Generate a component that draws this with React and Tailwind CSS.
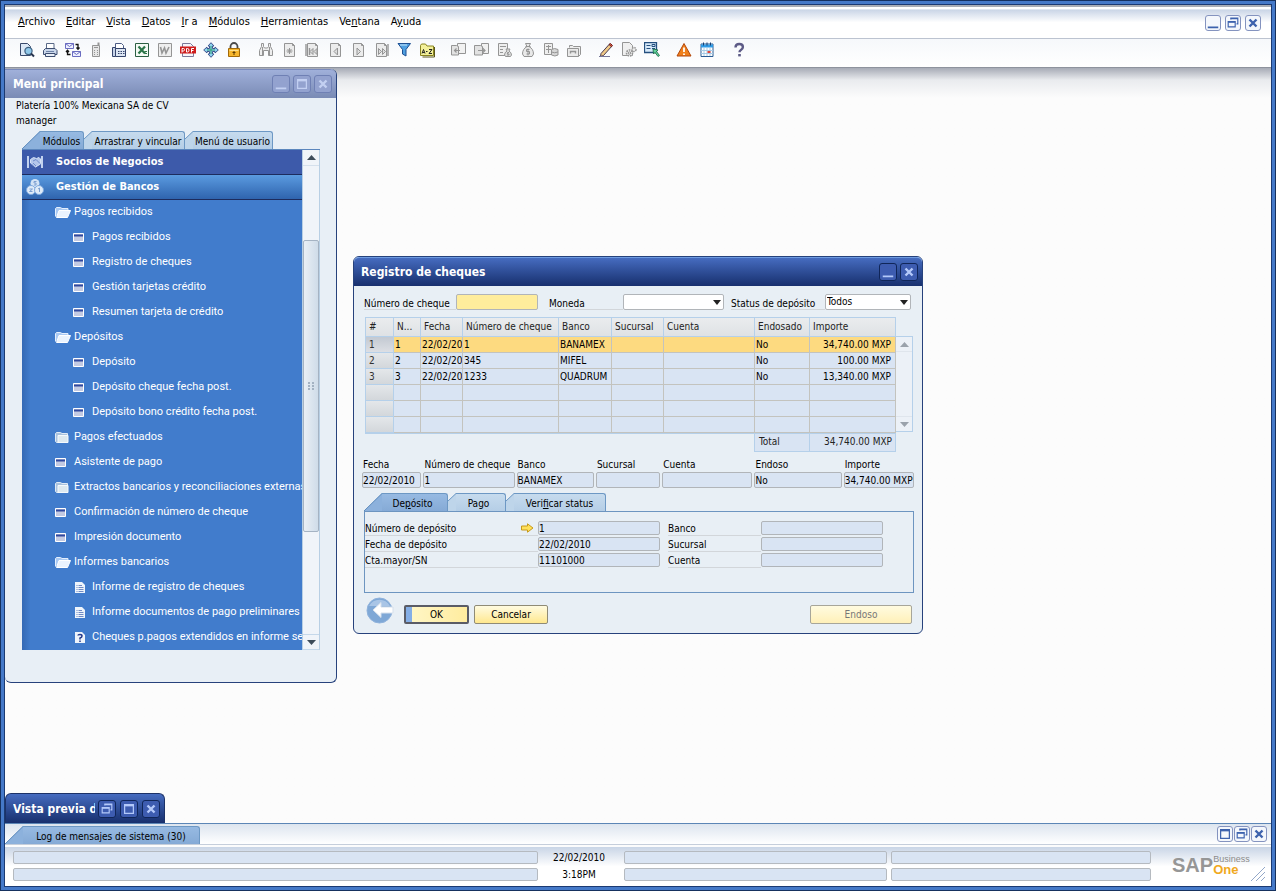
import React from 'react';

const UI = "font-['DejaVu_Sans_Condensed','DejaVu_Sans',sans-serif]";

/* ---------- glyphs ---------- */

function Svg({ children, size = 16 }) {
  return (
    <svg width={size} height={size} viewBox="0 0 16 16" fill="none" aria-hidden="true" className="block shrink-0">
      {children}
    </svg>
  );
}

const GRAY = '#959595';

function Sheet({ children, c = GRAY, fill = '#ececec' }) {
  return (
    <>
      <path d="M3.5 1.5h8l2 2v11h-10z" fill={fill} stroke={c} />
      <path d="M11.5 1.5v2h2" stroke={c} />
      {children}
    </>
  );
}

const ICONS = {
  preview: (
    <>
      <path d="M1.5 1.5h7l3 3v9h-10z" fill="#dce8f6" stroke="#39496b" />
      <circle cx="9.5" cy="9" r="3.6" fill="#8fc7e8" stroke="#3d5f80" strokeWidth="1.2" />
      <path d="M12 11.5l3 3" stroke="#26334d" strokeWidth="2" />
    </>
  ),
  print: (
    <>
      <path d="M4.5 7V1.5h7.500V7" fill="#fff" stroke="#5a6a88" />
      <path d="M1.500 8.500l2-2h9.500l2 2v4h-13.500z" fill="#c9d6ea" stroke="#3c4d70" />
      <path d="M3.500 11.500h9.500v3H3.500z" fill="#e9eff8" stroke="#3c4d70" />
      <path d="M4 9.500h8" stroke="#6f83a8" />
    </>
  ),
  mail: (
    <>
      <path d="M.5 1.500h8v5h-8z" fill="#eef0ff" stroke="#6a6cc0" />
      <path d="M.5 1.500l4 3 4-3" stroke="#6a6cc0" />
      <path d="M7.500 9.500h8v5h-8z" fill="#eef0ff" stroke="#6a6cc0" />
      <path d="M7.500 9.500l4 3 4-3" stroke="#6a6cc0" />
      <path d="M10.500 2.500h2.500v4M11.500 5.500L13 7.300l1.500-1.800M5.500 12.500H2.500V8.500M1 10l1.500-1.800L4 10" stroke="#111" strokeWidth="1.300" />
    </>
  ),
  phone: (
    <>
      <path d="M4.500 3.500h7v11h-7z" fill="#e6e6e6" stroke={GRAY} />
      <path d="M10.500 3V.5" stroke={GRAY} strokeWidth="2" />
      <path d="M6 5.500h4M6 8.500h1M9 8.500h1M6 10.500h1M9 10.500h1M6 12.500h1M9 12.500h1" stroke={GRAY} />
    </>
  ),
  fax: (
    <>
      <path d="M4.500 6V1.500h6l2 2V6" fill="#fff" stroke="#4d5c85" />
      <path d="M1.500 5.500h3v9h-3z" fill="#c7d3e8" stroke="#35446c" />
      <path d="M4.500 6.500h10v8h-10z" fill="#dde6f3" stroke="#35446c" />
      <path d="M7 9.500h1.500M9.500 9.500H11M12 9.500h1.500M7 11.500h1.500M9.500 11.500H11M12 11.500h1.500" stroke="#35446c" />
    </>
  ),
  excel: (
    <>
      <path d="M1.500 1.500h13v13h-13z" fill="#f4faf4" stroke="#2c5f43" />
      <path d="M4.500 4.500l6.500 7M11 4.500l-6.500 7" stroke="#2b7548" strokeWidth="2.200" />
      <path d="M10.500 9.500h2.500M11 11.500h2" stroke="#2b7548" />
    </>
  ),
  word: (
    <>
      <path d="M1.500 1.500h13v13h-13z" fill="#eee" stroke={GRAY} />
      <path d="M3.500 5l1.500 6 2.500-5 1.500 5 3-6" stroke={GRAY} strokeWidth="1.600" />
    </>
  ),
  pdf: (
    <>
      <path d="M2.500 1.500h8l3 3v10h-11z" fill="#f5f5fb" stroke="#7b7b9b" />
      <path d="M0 4.500h16v7H0z" fill="#cf1d1d" />
      <path d="M2 10.500v-4h1.500q1 0 1 1.200T3.500 9H2M6.500 6.500v3.500h1q1.500 0 1.500-1.800T7.500 6.500zM11.500 10.500v-4H14M11.500 8.500h2" stroke="#fff" />
    </>
  ),
  move: (
    <>
      <path d="M8 .7l3 3.300H9.500v2.500H12V5l3.300 3L12 11V9.500H9.500V12H11l-3 3.300L5 12h1.500V9.500H4V11L.7 8 4 5v1.500h2.500V4H5z" fill="#8fd3ee" stroke="#3f5690" />
      <path d="M8 4v8M4 8h8" stroke="#2f9a74" />
    </>
  ),
  lock: (
    <>
      <path d="M4.500 7V4.500a3.500 3.500 0 017 0V7" stroke="#4b4b4b" strokeWidth="1.800" />
      <path d="M2.500 6.500h11v8h-11z" fill="#f7b62c" stroke="#a1690a" />
      <path d="M3.500 8.500h9" stroke="#fde08b" />
      <path d="M8 9v4M6.500 10.500h3" stroke="#5d3b00" />
    </>
  ),
  find: (
    <path d="M3.500 1.500h2v3l1 1.500h3l1-1.500v-3h2v3l2 4v5h-4v-5h-5v5h-4v-5l2-4zM6.500 8.500h3M4.500 5v8M11.500 5v8" fill="#eee" stroke={GRAY} />
  ),
  add: <Sheet><path d="M8.500 6v6M5.500 9h6M6.500 7l4 4M10.500 7l-4 4" stroke={GRAY} /></Sheet>,
  first: <Sheet><path d="M2 2v12M5.500 6v7" stroke={GRAY} strokeWidth="1.400" /><path d="M9 6.500v6L6 9.500zM13 6.500v6l-3-3z" fill="#ddd" stroke={GRAY} /></Sheet>,
  prev: <Sheet><path d="M10.500 6v7L7 9.500z" fill="#ddd" stroke={GRAY} /></Sheet>,
  next: <Sheet><path d="M7 6v7l3.500-3.500z" fill="#ddd" stroke={GRAY} /></Sheet>,
  last: <Sheet><path d="M15 2v12" stroke={GRAY} strokeWidth="1.400" /><path d="M5.500 6.500v6l3-3zM9.500 6.500v6l3-3z" fill="#ddd" stroke={GRAY} /></Sheet>,
  filter: (
    <>
      <path d="M2 1.500h12.500l-4.500 6v6.500l-3.500-2V7.500z" fill="#4f9fe0" stroke="#1e4f92" />
      <path d="M4 3h7" stroke="#c8e6fb" />
    </>
  ),
  sort: (
    <>
      <path d="M1.500 13.500v-10l1-1.500h4l1.500 2h6.500v9.500z" fill="#f3f09a" stroke="#8a8420" />
      <path d="M15.500 5v10h-12" stroke="#5b571a" />
      <path d="M3 11.500l1.500-4 1.500 4M3.500 10.500h2M7 9.500h1.500M10 7.500h3l-3 4h3" stroke="#222" />
    </>
  ),
  copyFrom: (
    <>
      <path d="M6.500 1.500h8v10h-8z" fill="#f1f1f1" stroke={GRAY} />
      <path d="M.5 3.500h5l2 1v8.500h-7z" fill="#e2e2e2" stroke={GRAY} />
      <path d="M9 8.500H3.500M5.500 6.500l-2 2 2 2" stroke={GRAY} strokeWidth="1.200" />
    </>
  ),
  copyTo: (
    <>
      <path d="M7.500 1.500h7v10h-7z" fill="#f1f1f1" stroke={GRAY} />
      <path d="M.5 3.500h6l2 1v8.500h-8z" fill="#e2e2e2" stroke={GRAY} />
      <path d="M4 8.500h6.500M8.500 6l2.500 2.500L8.500 11" stroke={GRAY} strokeWidth="1.200" />
    </>
  ),
  gross: (
    <>
      <path d="M1.500 1.500h9v12h-9z" fill="#eee" stroke={GRAY} />
      <path d="M3 4.500h6M3 7.500h3M3 10.500h3" stroke={GRAY} />
      <path d="M9 7h4l-1 2q2.500 1.500 2.500 4l-1 1.500h-5L7.500 13q0-2.500 2.500-4z" fill="#ddd" stroke={GRAY} />
      <path d="M12 10.500h-1.500v1.500H12V13h-2" stroke={GRAY} />
    </>
  ),
  money: (
    <>
      <path d="M5.500 1.500h5l-1.500 3q4.500 2.500 4.500 7.500l-1.500 2.500H4L2.500 12q0-5 4.500-7.500z" fill="#e9e9e9" stroke={GRAY} />
      <path d="M9.500 7.500h-3v2h3v2.500h-3M8 6.500v7M5.500 4.500h5" stroke={GRAY} />
    </>
  ),
  volume: (
    <>
      <path d="M1.500 1.500h8v11h-8z" fill="#eee" stroke={GRAY} />
      <path d="M3 4.500h5M3 7.500h5M5.500 3v8" stroke={GRAY} />
      <path d="M8.500 7.500q3-2 6.500 0v5.500q-3 2-6.500 0z" fill="#d6d6d6" stroke={GRAY} />
      <path d="M8.500 10q3 1.500 6.500 0" stroke={GRAY} />
    </>
  ),
  drawer: (
    <>
      <path d="M3.500 5.500v-2h3l1 1h7v8l-2 2" fill="#eee" stroke={GRAY} />
      <path d="M1.500 6.500h11v8h-11z" fill="#eaeaea" stroke={GRAY} />
      <path d="M4.500 11.500v-2h5v2" stroke={GRAY} strokeWidth="1.400" />
    </>
  ),
  pencil: (
    <>
      <path d="M3 11.500L11.500 2l2.500 2-8.500 9.500-3 1z" fill="#f0c987" stroke="#4a3a50" />
      <path d="M11 2.500l1.500-1 2 2-1 1.200z" fill="#d4543e" stroke="#6c2020" />
      <path d="M1 14.500h11" stroke="#777799" />
    </>
  ),
  settings: (
    <>
      <path d="M1.500.5h7l3 3v10h-10z" fill="#efefef" stroke={GRAY} />
      <circle cx="8.500" cy="11" r="3" fill="#eee" stroke={GRAY} strokeWidth="1.600" strokeDasharray="1.600 1" />
      <circle cx="13" cy="7.500" r="2" fill="#eee" stroke={GRAY} strokeWidth="1.500" strokeDasharray="1.400 .8" />
      <circle cx="8.500" cy="11" r="1.200" stroke={GRAY} />
    </>
  ),
  form: (
    <>
      <path d="M.5.5h12v10H.5z" fill="#d8eafa" stroke="#25507f" strokeWidth="1.300" />
      <path d="M2.500 3.500h4M2.500 6.500h4M8 2.500h3v2H8zM8 6.500h3" stroke="#25507f" />
      <path d="M9 7l5 1-1.500 1.500 3 4-1.500 1-3-4-1.500 1.500z" fill="#63d39a" stroke="#166343" strokeWidth=".8" />
    </>
  ),
  alert: (
    <>
      <path d="M8 1.500l7 12.500H1z" fill="#f0801d" stroke="#b2470c" strokeLinejoin="round" />
      <path d="M8 5.500v4.500M8 11.500v1.500" stroke="#fff" strokeWidth="1.800" />
    </>
  ),
  calendar: (
    <>
      <path d="M2 2h12v12.500H2z" fill="#fff" stroke="#2b5c94" />
      <path d="M2 2.500h12v3H2z" fill="#2f9be6" />
      <path d="M4.500.5v3M8 .5v3M11.500.5v3" stroke="#123e74" />
      <path d="M5 6v8M8 6v8M11 6v8M2 8.500h12M2 11.500h12" stroke="#a8cbe6" />
      <path d="M8.500 9h3v2h-3z" fill="#e2463c" />
    </>
  ),
  help: (
    <>
      <path d="M4.500 5.500q0-3.500 3.700-3.500t3.700 3q0 1.800-2 3-1.400.8-1.400 2.300" stroke="#5c5a86" strokeWidth="2.400" />
      <path d="M7.200 12h2.600v2.400H7.200z" fill="#5c5a86" />
    </>
  ),
};

const TOOL_GROUPS = [
  [['preview', 'Vista preliminar'], ['print', 'Imprimir'], ['mail', 'Correo'], ['phone', 'SMS'], ['fax', 'Fax'], ['excel', 'Excel'], ['word', 'Word'], ['pdf', 'PDF'], ['move', 'Iniciar aplicación'], ['lock', 'Bloquear pantalla']],
  [['find', 'Buscar'], ['add', 'Crear'], ['first', 'Primero'], ['prev', 'Anterior'], ['next', 'Siguiente'], ['last', 'Último'], ['filter', 'Filtrar'], ['sort', 'Clasificar']],
  [['copyFrom', 'Documento base'], ['copyTo', 'Documento destino'], ['gross', 'Ganancia bruta'], ['money', 'Medios de pago'], ['volume', 'Volumen y peso'], ['drawer', 'Diario']],
  [['pencil', 'Editar'], ['settings', 'Parametrizar'], ['form', 'Formulario']],
  [['alert', 'Alertas'], ['calendar', 'Calendario']],
  [['help', 'Ayuda']],
];

const MENUS = [['', 'A', 'rchivo'], ['', 'E', 'ditar'], ['', 'V', 'ista'], ['', 'D', 'atos'], ['', 'I', 'r a'], ['', 'M', 'ódulos'], ['', 'H', 'erramientas'], ['Ve', 'n', 'tana'], ['A', 'y', 'uda']];

const WIN_GLYPHS = {
  min: <path d="M2 13h12" strokeWidth="2" />,
  max: <><path d="M3 3h10v10H3z" strokeWidth="1.400" /><path d="M3 4h10" strokeWidth="2" /></>,
  restore: <><path d="M2.500 6.500h8v6h-8zM5.500 4V2.500h8v6.500H12" strokeWidth="1.300" /><path d="M2.500 7h8M5.500 3h8" strokeWidth="1.600" /></>,
  close: <path d="M4 4l8 8M12 4l-8 8" strokeWidth="2.800" />,
};

const WIN_TONES = {
  dim: 'border-[#6f80b4] bg-[#93a2cf] text-[#c3d0f2]',
  dark: 'border-[#102659] bg-[#3d5cb0] text-[#b4c9fa]',
  light: 'border-[#8493bf] bg-[#f4f7fc] text-[#3d62ad]',
};

const WIN_LABELS = { min: 'Minimizar', max: 'Maximizar', restore: 'Restaurar', close: 'Cerrar' };

function WinButton({ kind, tone, size = 'h-[18px] w-[18px]' }) {
  return (
    <button type="button" aria-label={WIN_LABELS[kind]} className={`flex items-center justify-center rounded-[3px] border ${size} ${WIN_TONES[tone]}`}>
      <svg width="14" height="14" viewBox="0 0 16 16" fill="none" stroke="currentColor" className="block">{WIN_GLYPHS[kind]}</svg>
    </button>
  );
}

/* ---------- tabs ---------- */

function Tab({ active, wide, className = '', children }) {
  const fill = active ? '#8cb1dc' : '#bed5ea';
  const body = active ? 'bg-linear-to-b from-[#97bae2] to-[#85aad6]' : 'bg-linear-to-b from-[#c6dbee] to-[#b5cee6]';
  return (
    <button type="button" role="tab" aria-selected={!!active} className="flex h-[18px] shrink-0 items-stretch">
      {wide ? (
        <svg width="18" height="18" viewBox="0 0 18 18" className="block" aria-hidden="true">
          <path d="M0 18L18 0v18z" fill={fill} />
          <path d="M0 18L18 .5" stroke="#5f8cbc" fill="none" />
        </svg>
      ) : (
        <svg width="8" height="18" viewBox="0 0 8 18" className="block" aria-hidden="true">
          <path d="M0 18V8L8 0v18z" fill={fill} />
          <path d="M0 8L8 .5" stroke="#6d98c4" fill="none" />
        </svg>
      )}
      <span className={`flex items-center justify-center rounded-tr-[3px] border-t border-r border-[#6d98c4] pt-px whitespace-nowrap ${body} ${className}`}>
        <span>{children}</span>
      </span>
    </button>
  );
}

/* ---------- main menu ---------- */

function TreeIcon({ kind }) {
  if (kind === 'open')
    return (
      <svg width="16" height="14" viewBox="0 0 16 14" className="block shrink-0" aria-hidden="true">
        <path d="M.5 10.500v-8l1-1h4l1.500 1h6v2" fill="#a9c9f3" stroke="#e4effd" />
        <path d="M1.500 11.500l2.500-7h11.500l-3 7z" fill="#eaf3fe" stroke="#fff" />
      </svg>
    );
  if (kind === 'closed')
    return (
      <svg width="16" height="14" viewBox="0 0 16 14" className="block shrink-0" aria-hidden="true">
        <path d="M.5 10.500V2.500l1-1h4l1.500 1h5.500v9h-11z" fill="#a9c2de" stroke="#dfeaf5" />
        <path d="M3 4.500h10v7H3z" fill="#dde9f0" stroke="#f5fafd" />
      </svg>
    );
  if (kind === 'win')
    return (
      <svg width="12" height="12" viewBox="0 0 12 12" className="block shrink-0" aria-hidden="true">
        <path d="M.5 1.500h10v8H.5z" fill="#c3cae2" stroke="#fff" />
        <path d="M1 2.500h9v2H1z" fill="#30489e" />
      </svg>
    );
  return (
    <svg width="12" height="12" viewBox="0 0 12 12" className="block shrink-0" aria-hidden="true">
      <path d="M1 0h7l3 3v8H1z" fill="#eef4fb" />
      {kind === 'doc' ? (
        <path d="M2.500 3.500h1M4.500 3.500H8M2.500 5.500h1M4.500 5.500h5M2.500 7.500h1M4.500 7.500h5M2.500 9.500h1M4.500 9.500h5" stroke="#6f8ac4" />
      ) : (
        <path d="M4 3.500q0-1 2-1t2 1.500T6 6V7.500M6 8.500V10" fill="none" stroke="#243a8c" strokeWidth="1.500" />
      )}
    </svg>
  );
}

const TREE = [
  [0, 'open', 'Pagos recibidos'],
  [1, 'win', 'Pagos recibidos'],
  [1, 'win', 'Registro de cheques'],
  [1, 'win', 'Gestión tarjetas crédito'],
  [1, 'win', 'Resumen tarjeta de crédito'],
  [0, 'open', 'Depósitos'],
  [1, 'win', 'Depósito'],
  [1, 'win', 'Depósito cheque fecha post.'],
  [1, 'win', 'Depósito bono crédito fecha post.'],
  [0, 'closed', 'Pagos efectuados'],
  [0, 'win', 'Asistente de pago'],
  [0, 'closed', 'Extractos bancarios y reconciliaciones externas'],
  [0, 'win', 'Confirmación de número de cheque'],
  [0, 'win', 'Impresión documento'],
  [0, 'open', 'Informes bancarios'],
  [1, 'doc', 'Informe de registro de cheques'],
  [1, 'doc', 'Informe documentos de pago preliminares'],
  [1, 'query', 'Cheques p.pagos extendidos en informe separado'],
];

function Arrow({ up, color }) {
  return (
    <svg width="9" height="5" viewBox="0 0 9 5" className="block" aria-hidden="true">
      <path d={up ? 'M0 5L4.500 0 9 5z' : 'M0 0l4.500 5L9 0z'} fill={color} />
    </svg>
  );
}

function MainMenu() {
  return (
    <section className="absolute top-px left-0 w-[332px] rounded-tr-md rounded-b-md border-r border-b border-[#27427c] bg-[#e8eff6] pb-8">
      <header className="flex h-[29px] items-center justify-between rounded-tr-md border-t border-[#7a8bbd] bg-linear-to-b from-[#a0b0da] to-[#7a8bb5] pr-1 pl-2">
        <h2 className="text-[12px] font-bold text-white">Menú principal</h2>
        <div className="flex gap-[3px]">
          <WinButton kind="min" tone="dim" />
          <WinButton kind="max" tone="dim" />
          <WinButton kind="close" tone="dim" />
        </div>
      </header>
      <div className="px-[11px] text-[10px] leading-[15px]">
        <p>Platería 100% Mexicana SA de CV</p>
        <p>manager</p>
      </div>
      <div role="tablist" className="mt-[3px] flex pl-[17px] text-[10px]">
        <Tab active wide className="w-[44px]">Módulos</Tab>
        <Tab className="w-[93px]">Arrastrar y vincular</Tab>
        <Tab className="w-[80px]">Menú de usuario</Tab>
      </div>
      <div className="mr-4 ml-[17px] flex border-t border-[#5b86bd]">
        <div className="min-w-0 flex-1 overflow-hidden bg-[#417ccc] text-[11px] text-white">
          <button type="button" className="flex h-[25px] w-full items-center gap-3 border-b border-[#1d2c5e] bg-[#3d5aaa] pl-1 font-bold">
            <svg width="18" height="14" viewBox="0 0 18 14" fill="none" aria-hidden="true">
              <path d="M2 1v12M16 1v12" stroke="#c3d2ef" strokeWidth="2" />
              <path d="M4.500 4.500l3-2 3 1 2.500-1 1.500 1.500v5l-5 3-5-4z" fill="#b4c6ea" stroke="#d5e1f6" />
              <path d="M7 6l3-1.500 4 4M7 8l3 3M5.500 9L8 11.500" stroke="#6e8acb" />
            </svg>
            Socios de Negocios
          </button>
          <button type="button" className="flex h-[25px] w-full items-center gap-3 border-b border-[#1d2c5e] bg-linear-to-b from-[#5b9be0] to-[#2f64ae] pl-1 font-bold">
            <svg width="18" height="16" viewBox="0 0 18 16" fill="none" aria-hidden="true">
              <circle cx="9" cy="4.500" r="4.500" fill="#d3e3f6" />
              <circle cx="5" cy="11" r="4.500" fill="#dfebf8" stroke="#7ea9df" />
              <circle cx="13" cy="11" r="4.500" fill="#dfebf8" stroke="#7ea9df" />
              <path d="M10.500 2.500H8v1.500h2V6H8M3.500 10h3l-3 2.500h3M12 10l1.500-1v4" stroke="#7c9fd0" />
            </svg>
            Gestión de Bancos
          </button>
          <ul className="bg-linear-to-r from-[#3569b4] via-[#417ccc] via-3% to-[#417ccc] font-[Roboto,sans-serif]">
            {TREE.map(([level, kind, label], i) => (
              <li key={i}>
                <button type="button" className={`flex h-[25px] w-full items-center whitespace-nowrap ${level ? 'pl-[51px]' : 'pl-[33px]'}`}>
                  <span className="flex w-[19px] shrink-0 items-center">
                    {kind === 'doc' || kind === 'query' ? <span className="w-px" /> : null}
                    <TreeIcon kind={kind} />
                  </span>
                  {label}
                </button>
              </li>
            ))}
          </ul>
        </div>
        <div className="flex w-[18px] flex-col border-x border-[#b8cfe4] bg-[#f0f4f9]">
          <button type="button" aria-label="Subir" className="flex h-4 items-center justify-center border-b border-[#d5e0ec]"><Arrow up color="#3d4c5a" /></button>
          <div className="h-[74px]" />
          <div className="flex flex-1 items-center justify-center rounded-xs border border-[#a5b3c3] bg-linear-to-r from-[#e9eff5] to-[#cfdce9]">
            <svg width="6" height="8" viewBox="0 0 6 8" fill="#a3b2c2" aria-hidden="true">
              <path d="M0 0h2v2H0zM4 0h2v2H4zM0 3h2v2H0zM4 3h2v2H4zM0 6h2v2H0zM4 6h2v2H4z" />
            </svg>
          </div>
          <div className="h-[102px]" />
          <button type="button" aria-label="Bajar" className="flex h-4 items-center justify-center border-y border-[#c5d8ea]"><Arrow color="#3d4c5a" /></button>
        </div>
      </div>
    </section>
  );
}

/* ---------- cheque register ---------- */

const HEADS = ['#', 'N...', 'Fecha', 'Número de cheque', 'Banco', 'Sucursal', 'Cuenta', 'Endosado', 'Importe'];
const ROWS = [
  ['1', '1', '22/02/20', '1', 'BANAMEX', '', '', 'No', '34,740.00 MXP'],
  ['2', '2', '22/02/20', '345', 'MIFEL', '', '', 'No', '100.00 MXP'],
  ['3', '3', '22/02/20', '1233', 'QUADRUM', '', '', 'No', '13,340.00 MXP'],
  ['', '', '', '', '', '', '', '', ''],
  ['', '', '', '', '', '', '', '', ''],
  ['', '', '', '', '', '', '', '', ''],
];

const FIELD = 'min-w-0 rounded-xs border border-[#b1b5b9] bg-[#d9e4f3] p-0 text-[10px] outline-none';

const SUMMARY = [
  ['Fecha', '22/02/2010', 'w-[60px]'],
  ['Número de cheque', '1', 'w-[92px]'],
  ['Banco', 'BANAMEX', 'w-[78px]'],
  ['Sucursal', '', 'w-[65px]'],
  ['Cuenta', '', 'w-[91px]'],
  ['Endoso', 'No', 'w-[88px]'],
  ['Importe', '34,740.00 MXP', 'w-[71px]'],
];

function Combo({ id, value, className }) {
  return (
    <span className={`relative flex ${className}`}>
      <select id={id} defaultValue={value} className="h-4 w-full appearance-none rounded-xs border border-[#b1b5b9] bg-white pl-px text-[10px] leading-[14px]">
        <option value={value}>{value}</option>
      </select>
      <span className="pointer-events-none absolute top-1.5 right-[3px]">
        <svg width="8" height="5" viewBox="0 0 8 5" className="block" aria-hidden="true"><path d="M0 0h8L4 5z" fill="#222" /></svg>
      </span>
    </span>
  );
}

function DetailRow({ id, label, value, arrow, labelWidth }) {
  return (
    <div className="flex h-4 items-center">
      <label htmlFor={id} className={`flex h-[15px] items-center justify-between border-b border-[#d2d6da] pt-0.5 pr-1 ${labelWidth}`}>
        {label}
        {arrow && (
          <svg width="13" height="10" viewBox="0 0 13 10" className="mb-0.5 block" aria-hidden="true">
            <path d="M.5 3h6V.800L12 5 6.500 9.200V7h-6z" fill="#ffe15a" stroke="#c79a1c" />
          </svg>
        )}
      </label>
      <input id={id} readOnly defaultValue={value} className={`${FIELD} h-[14px] w-[122px]`} />
    </div>
  );
}

const BTN = 'flex h-[19px] items-center justify-center rounded-xs border text-[10px]';

function ChequeRegister() {
  return (
    <section className="absolute top-[188px] left-[348px] w-[570px] rounded-md border border-[#27427c] bg-[#e8eff5] text-[10px]">
      <header className="flex h-[29px] items-center justify-between rounded-t-[5px] border-t border-[#6e9be0] bg-linear-to-b from-[#466cc0] to-[#18306e] pr-1 pl-[7px]">
        <h2 className="text-[12px] font-bold text-white">Registro de cheques</h2>
        <div className="flex gap-[3px]">
          <WinButton kind="min" tone="dark" />
          <WinButton kind="close" tone="dark" />
        </div>
      </header>

      <div className="px-2 pt-2 pb-[9px]">
        <div className="flex items-center pl-0.5">
          <label htmlFor="cheque" className="h-4 w-[92px] border-b border-[#d2d6da] pt-0.5">Número de cheque</label>
          <input id="cheque" className="h-4 w-[82px] rounded-xs border border-[#b1b5b9] bg-[#ffed9c] px-px outline-none" />
          <label htmlFor="moneda" className="ml-[11px] h-4 w-[74px] border-b border-[#d2d6da] pt-0.5">Moneda</label>
          <Combo id="moneda" value="" className="w-[101px]" />
          <label htmlFor="status" className="ml-[7px] h-4 w-[94px] border-b border-[#d2d6da] pt-0.5">Status de depósito</label>
          <Combo id="status" value="Todos" className="w-[86px]" />
        </div>

        <div className="mt-[7px] flex items-start pl-[3px]">
          <table className="w-[531px] table-fixed border-separate border-spacing-0 text-left">
            <colgroup>
              <col className="w-[29px]" /><col className="w-[27px]" /><col className="w-[42px]" /><col className="w-[96px]" /><col className="w-[53px]" /><col className="w-[52px]" /><col className="w-[91px]" /><col className="w-[55px]" /><col className="w-[86px]" />
            </colgroup>
            <thead>
              <tr>
                {HEADS.map((h, i) => (
                  <th key={h} className={`h-5 overflow-hidden border-t border-r border-b border-[#b5d0ea] bg-linear-to-b from-[#eaecee] to-[#dfe2e5] p-0 pb-0.5 pl-[3px] font-normal whitespace-nowrap text-[#222] ${i === 0 ? 'border-l' : ''}`}>{h}</th>
                ))}
              </tr>
            </thead>
            <tbody>
              {ROWS.map((row, r) => (
                <tr key={r} className={r === 0 ? 'bg-[#fdda80]' : 'bg-[#d9e4f3]'}>
                  {row.map((cell, c) => (
                    <td
                      key={c}
                      className={`h-4 overflow-hidden border-r border-b p-0 leading-[14px] whitespace-nowrap ${
                        c === 0
                          ? `border-l border-[#b5d0ea] pl-[3px] text-[#333] ${r === 0 ? 'bg-linear-to-b from-[#c3c9d2] to-[#dcdfe4]' : 'bg-linear-to-b from-[#e4e7ea] to-[#d3d7db]'}`
                          : 'border-[#c3c3be] pl-px'
                      } ${c === 8 ? 'pr-1 text-right' : ''}`}
                    >
                      {cell}
                    </td>
                  ))}
                </tr>
              ))}
            </tbody>
            <tfoot>
              <tr>
                <td colSpan="7" className="border-t border-r border-[#b5d0ea] p-0" />
                <td className="h-[19px] border-t border-r border-b border-[#b5d0ea] bg-[#d9e4f3] p-0 pb-0.5 pl-1 text-[#222]">Total</td>
                <td className="border-t border-r border-b border-[#b5d0ea] bg-[#d9e4f3] p-0 pr-[3px] pb-0.5 text-right text-[#222]">34,740.00 MXP</td>
              </tr>
            </tfoot>
          </table>
          <div className="mt-[19px] flex h-[96px] w-[17px] flex-col justify-between border border-l-0 border-[#b5d0ea] bg-[#ecf1f7]">
            <button type="button" aria-label="Subir" className="flex h-[15px] items-center justify-center border-b border-[#dfe5ec]"><Arrow up color="#9aa2ab" /></button>
            <button type="button" aria-label="Bajar" className="flex h-[15px] items-center justify-center border-t border-[#dfe5ec]"><Arrow color="#9aa2ab" /></button>
          </div>
        </div>

        <div className="mt-[5px] flex gap-0.5">
          {SUMMARY.map(([label, value, width], i) => (
            <div key={label} className={`flex flex-col ${width}`}>
              <label htmlFor={`sum-${i}`} className="h-[15px] pl-px leading-[15px] whitespace-nowrap">{label}</label>
              <input id={`sum-${i}`} readOnly defaultValue={value} className={`${FIELD} h-4 w-full`} />
            </div>
          ))}
        </div>

        <div role="tablist" className="mt-[5px] flex pl-0.5">
          <Tab active wide className="w-[66px]"><span className="mr-1">De<u>p</u>ósito</span></Tab>
          <Tab className="w-[50px]"><span className="mr-1">Pa<u>g</u>o</span></Tab>
          <Tab className="w-[92px]">Veri<u>f</u>icar status</Tab>
        </div>
        <div className="ml-0.5 flex h-[82px] w-[550px] gap-2 border border-[#6d95c0] pt-2">
          <div>
            <DetailRow id="d1" label="Número de depósito" value="1" arrow labelWidth="w-[173px]" />
            <DetailRow id="d2" label="Fecha de depósito" value="22/02/2010" labelWidth="w-[173px]" />
            <DetailRow id="d3" label="Cta.mayor/SN" value="11101000" labelWidth="w-[173px]" />
          </div>
          <div>
            <DetailRow id="d4" label="Banco" value="" labelWidth="w-[93px]" />
            <DetailRow id="d5" label="Sucursal" value="" labelWidth="w-[93px]" />
            <DetailRow id="d6" label="Cuenta" value="" labelWidth="w-[93px]" />
          </div>
        </div>

        <div className="mt-1 flex items-end pr-0.5 pl-1">
          <button type="button" aria-label="Volver" className="mr-2.5">
            <svg width="28" height="27" viewBox="0 0 28 27" className="block" aria-hidden="true">
              <circle cx="13.500" cy="13.500" r="12.500" fill="#7fa8d6" stroke="#8fb2dc" />
              <path d="M3 9a12 12 0 0121 0z" fill="#a9c5e6" />
              <path d="M7 13l8-7.500v4.500h12v6H15v4.500z" fill="#fff" stroke="#d5dfeb" />
            </svg>
          </button>
          <button type="button" className={`${BTN} w-[65px] border-2 border-[#5a5c66] bg-linear-to-r from-[#84aee6] from-10% via-[#fff6c4] via-10% to-[#ffec9e]`}>OK</button>
          <button type="button" className={`${BTN} ml-[5px] w-[74px] border-[#8f8b76] bg-linear-to-b from-[#fffbe0] to-[#ffe88e]`}>Cancelar</button>
          <button type="button" disabled className={`${BTN} ml-auto w-[102px] border-[#a7a69a] bg-linear-to-b from-[#fffbe0] to-[#fff0b8] text-[#777]`}>Endoso</button>
        </div>
      </div>
    </section>
  );
}

/* ---------- status bar ---------- */

function StatusRow({ text }) {
  return (
    <div className="flex items-center">
      <div className="h-[13px] flex-[526] rounded-xs border border-[#b5bac0] bg-[#d9e4f3]" />
      <span className="w-[86px] pr-1 text-center text-[10px] leading-[13px]">{text}</span>
      <div className="h-[13px] flex-[263] rounded-xs border border-[#b5bac0] bg-[#d9e4f3]" />
      <div className="ml-1 h-[13px] flex-[259] rounded-xs border border-[#b5bac0] bg-[#d9e4f3]" />
    </div>
  );
}

export default function App() {
  return (
    <div className={`flex min-h-screen flex-col border border-[#16315f] bg-[#4579c8] p-[3px] text-black ${UI}`}>
      <div className="flex flex-1 flex-col border border-[#1b3a72] bg-[#fcfcfc]">
        <nav className="flex h-[34px] items-center justify-between border-t-2 border-b border-t-[#a9adb5] border-b-[#bcc3d0] bg-linear-to-b from-white from-5% via-[#cbd6e7] via-10% to-white to-50% pr-2 pl-[13px] text-[11px]">
          <div className="flex gap-[11px]">
            {MENUS.map(([a, b, c]) => (
              <button type="button" key={a + b + c}>{a}<u>{b}</u>{c}</button>
            ))}
          </div>
          <div className="flex gap-1 pr-0.5">
            <WinButton kind="min" tone="light" size="h-4 w-4" />
            <WinButton kind="restore" tone="light" size="h-4 w-4" />
            <WinButton kind="close" tone="light" size="h-4 w-4" />
          </div>
        </nav>
        <div className="flex h-[29px] items-start gap-4 border-b border-[#8e939d] bg-linear-to-b from-[#f6f8fb] to-white pt-[3px] pl-3.5">
          {TOOL_GROUPS.map((group, i) => (
            <div key={i} className="flex gap-[7px]">
              {group.map(([name, label]) => (
                <button type="button" key={name} aria-label={label}><Svg>{ICONS[name]}</Svg></button>
              ))}
            </div>
          ))}
        </div>

        <main className="relative min-h-[640px] flex-1 overflow-hidden bg-linear-to-b from-[#a7abb6] via-[#e9ebee] via-[12px] to-[#fcfcfc] to-[30px]">
          <MainMenu />
          <ChequeRegister />
          <section className="absolute bottom-0 left-0 flex h-[30px] w-[160px] items-center justify-between rounded-t-md border border-b-0 border-[#1c3268] bg-linear-to-b from-[#466cc0] to-[#18306e] pr-1 pl-[7px]">
            <h2 className="w-[82px] overflow-hidden text-[12px] font-bold whitespace-nowrap text-white">Vista previa de</h2>
            <div className="flex gap-1">
              <WinButton kind="restore" tone="dark" />
              <WinButton kind="max" tone="dark" />
              <WinButton kind="close" tone="dark" />
            </div>
          </section>
        </main>

        <div className="flex h-[22px] items-end justify-between border-t border-b border-t-[#5c86b6] border-b-[#c5cedb] bg-linear-to-b from-[#dde5ef] to-white pr-1">
          <Tab active wide className="w-[177px] text-[10px]">Log de mensajes de sistema (30)</Tab>
          <div className="flex gap-px self-center">
            <WinButton kind="max" tone="light" size="h-4 w-4" />
            <WinButton kind="restore" tone="light" size="h-4 w-4" />
            <WinButton kind="close" tone="light" size="h-4 w-4" />
          </div>
        </div>
        <footer className="mt-0.5 flex h-[39px] items-start bg-linear-to-b from-[#c9d5e6] to-white to-50% pt-1 pl-2">
          <div className="flex flex-1 flex-col gap-1">
            <StatusRow text="22/02/2010" />
            <StatusRow text="3:18PM" />
          </div>
          <div className="flex w-[120px] items-start pt-1 pl-[21px]" role="img" aria-label="SAP Business One">
            <span className="pt-px font-['Liberation_Sans',sans-serif] text-[20px] leading-[18px] font-bold text-[#969696]">SAP</span>
            <span className="flex flex-col font-['Liberation_Sans',sans-serif]">
              <span className="text-[9px] leading-[9px] text-[#8b8b8b]">Business</span>
              <span className="text-[13px] leading-[12px] font-bold text-[#f0a91f]">One</span>
            </span>
            <svg width="14" height="14" viewBox="0 0 14 14" fill="none" stroke="#93a8c9" className="mt-3 ml-px" aria-hidden="true">
              <path d="M0 14L14 0M5 14l9-9M10 14l4-4" />
            </svg>
          </div>
        </footer>
      </div>
    </div>
  );
}
